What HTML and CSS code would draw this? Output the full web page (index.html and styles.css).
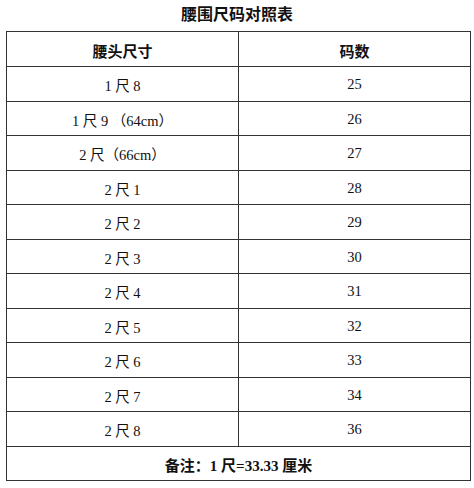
FILE: index.html
```html
<!DOCTYPE html>
<html lang="zh">
<head>
<meta charset="utf-8">
<link rel="stylesheet" href="styles.css">
</head>
<body>
<div class="page">
  <h1 class="title">腰围尺码对照表</h1>
  <table class="size-table">
    <thead>
      <tr class="head-row"><th>腰头尺寸</th><th>码数</th></tr>
    </thead>
    <tbody>
      <tr><td>1 尺 8</td><td>25</td></tr>
      <tr><td>1 尺 9 （64cm）</td><td>26</td></tr>
      <tr><td>2 尺（66cm）</td><td>27</td></tr>
      <tr><td>2 尺 1</td><td>28</td></tr>
      <tr><td>2 尺 2</td><td>29</td></tr>
      <tr><td>2 尺 3</td><td>30</td></tr>
      <tr><td>2 尺 4</td><td>31</td></tr>
      <tr><td>2 尺 5</td><td>32</td></tr>
      <tr><td>2 尺 6</td><td>33</td></tr>
      <tr><td>2 尺 7</td><td>34</td></tr>
      <tr><td>2 尺 8</td><td>36</td></tr>
    </tbody>
    <tfoot>
      <tr class="foot-row"><td colspan="2">备注：1 尺=33.33 厘米</td></tr>
    </tfoot>
  </table>
</div>
</body>
</html>
```
FILE: styles.css
```css
html, body {
  margin: 0;
  padding: 0;
  background: #fff;
}
.page {
  width: 474px;
  padding-top: 4px;
  font-family: "Liberation Serif", "Noto Sans CJK SC", serif;
  color: #111;
  text-spacing-trim: space-all;
}
.title {
  margin: 0;
  height: 27px;
  line-height: 22px;
  font-size: 16px;
  font-weight: bold;
  text-align: center;
}
.size-table {
  margin-left: 6px;
  width: 465px;
  border-collapse: collapse;
  table-layout: fixed;
}
.size-table th,
.size-table td {
  border: 1px solid #333;
  width: 50%;
  padding: 2px 0 0;
  text-align: center;
  vertical-align: middle;
  font-size: 14.5px;
}
.size-table th {
  font-size: 15px;
  font-weight: bold;
}
.head-row {
  height: 35px;
}
.size-table tbody tr {
  height: 34.5px;
}
.foot-row {
  height: 34.5px;
}
.foot-row td {
  font-weight: bold;
  font-size: 15px;
}
```
